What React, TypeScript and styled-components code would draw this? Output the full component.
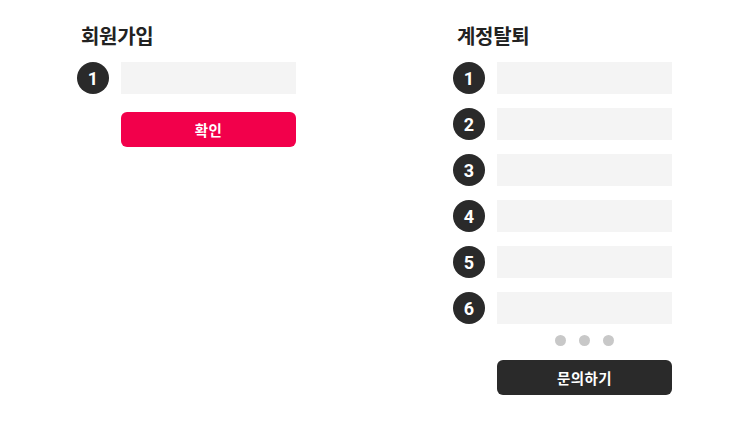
import React from "react"
import styled, { createGlobalStyle } from "styled-components"

const FONT = `"Noto Sans CJK KR", "Noto Sans", sans-serif`

const GlobalStyle = createGlobalStyle`
  html, body {
    margin: 0;
    padding: 0;
    background: #ffffff;
    font-family: ${ FONT };
  }
`

const Page = styled.div`
  display: flex;
  gap: 157px;
  padding: 22px 0 0 77px;
`

const Column = styled.section`
  width: 219px;
  display: flex;
  flex-direction: column;
`

const Title = styled.h2`
  margin: 0 0 10px 4px;
  height: 30px;
  line-height: 28px;
  font-size: 20px;
  font-weight: 700;
  color: #222222;
  letter-spacing: -0.3px;
`

const List = styled.div`
  display: flex;
  flex-direction: column;
  gap: 14px;
`

const Row = styled.div`
  display: flex;
  align-items: center;
  gap: 12px;
`

const Badge = styled.span`
  flex: 0 0 32px;
  width: 32px;
  height: 32px;
  border-radius: 50%;
  background: #2a2a2a;
  color: #ffffff;
  display: flex;
  align-items: center;
  justify-content: center;
  font-family: Roboto, "Noto Sans", sans-serif;
  font-weight: 700;
  font-size: 18px;
`

const Field = styled.div`
  flex: 1;
  height: 32px;
  background: #f4f4f4;
`

const Body = styled.div`
  margin-left: 44px;
  display: flex;
  flex-direction: column;
  align-items: stretch;
`

const Dots = styled.div`
  display: flex;
  justify-content: center;
  gap: 13px;
  margin-top: 11px;
`

const Dot = styled.span`
  width: 11px;
  height: 11px;
  border-radius: 50%;
  background: #c8c8c8;
`

const Button = styled.button<{ $tone: "red" | "dark"; $top: number }>`
  margin-top: ${ (p) => p.$top }px;
  height: 35px;
  border: none;
  border-radius: 6px;
  background: ${ (p) => (p.$tone === "red" ? "#f2004b" : "#2a2a2a") };
  color: #ffffff;
  font-family: ${ FONT };
  font-size: 14.5px;
  font-weight: 700;
  letter-spacing: 0.4px;
  cursor: pointer;
`

export default function App()
{
  const withdraw = [1, 2, 3, 4, 5, 6]

  return (
    <>
      <GlobalStyle />
      <Page>
        <Column>
          <Title>회원가입</Title>
          <List>
            <Row>
              <Badge>1</Badge>
              <Field />
            </Row>
          </List>
          <Body>
            <Button $tone="red" $top={18}>확인</Button>
          </Body>
        </Column>

        <Column>
          <Title>계정탈퇴</Title>
          <List>
            {withdraw.map((n) => (
              <Row key={n}>
                <Badge>{n}</Badge>
                <Field />
              </Row>
            ))}
          </List>
          <Body>
            <Dots>
              <Dot />
              <Dot />
              <Dot />
            </Dots>
            <Button $tone="dark" $top={14}>문의하기</Button>
          </Body>
        </Column>
      </Page>
    </>
  )
}
